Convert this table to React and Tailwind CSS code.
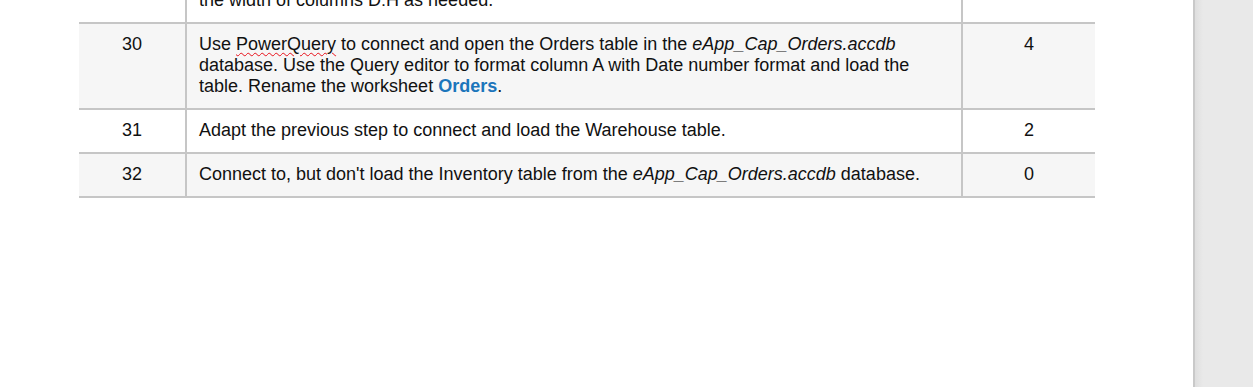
import React from "react";

const font = { fontFamily: '"Liberation Sans", Arial, Helvetica, sans-serif' };

function Row({ num, pts, children, striped, clipped }) {
  return (
    <div
      className={`grid grid-cols-[106px_2px_774px_2px_132px] border-b-2 border-[#c6c6c6] ${
        striped ? "bg-[#f6f6f6]" : "bg-white"
      }`}
    >
      <div className="text-center pt-[10px] pb-[11px]">{num}</div>
      <div className="bg-[#c6c6c6]" />
      <div className={`pl-[12px] pr-[12px] ${clipped ? "pb-[11px]" : "pt-[10px] pb-[11px]"}`}>{children}</div>
      <div className="bg-[#c6c6c6]" />
      <div className="text-center pt-[10px] pb-[11px]">{pts}</div>
    </div>
  );
}

export default function App() {
  return (
    <div className="w-[1253px] h-[387px] overflow-hidden bg-white flex text-[18px] leading-[21px] text-[#111]" style={font}>
      <div className="flex-1 pl-[79px]">
        <div className="w-[1016px]">
          <div className="h-[24px] overflow-hidden flex flex-col justify-end">
            <Row clipped>the width of columns D:H as needed.</Row>
          </div>
          <Row num="30" pts="4" striped>
            Use{" "}
            <span className="underline decoration-wavy decoration-[#e8101a] decoration-1 underline-offset-[2px]">PowerQuery</span>{" "}
            to connect and open the Orders table in the <i>eApp_Cap_Orders.accdb</i> database. Use the Query editor to format column A with Date number format and load the table. Rename the worksheet{" "}
            <b className="text-[#1b75bb]">Orders</b>.
          </Row>
          <Row num="31" pts="2">
            Adapt the previous step to connect and load the Warehouse table.
          </Row>
          <Row num="32" pts="0" striped>
            Connect to, but don't load the Inventory table from the <i>eApp_Cap_Orders.accdb</i> database.
          </Row>
        </div>
      </div>
      <div className="w-[60px] h-full border-l-2 border-[#c9c9c9] bg-[linear-gradient(to_right,#dedede,#e9e9e9_8px,#e9e9e9)]" />
    </div>
  );
}
